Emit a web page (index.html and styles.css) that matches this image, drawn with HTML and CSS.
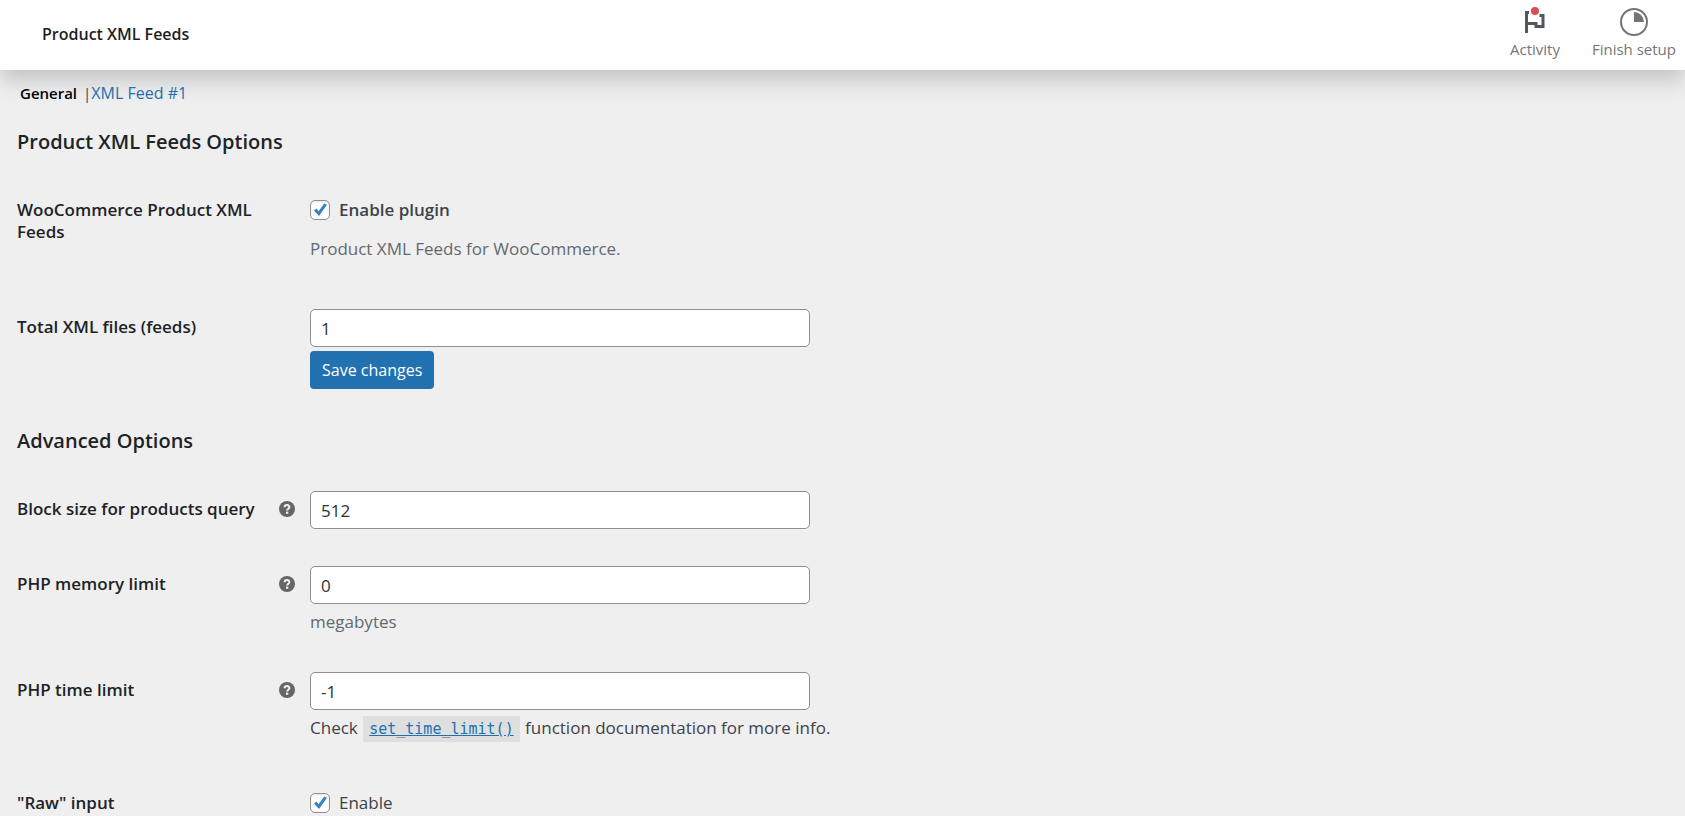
FILE: index.html
```html
<!DOCTYPE html>
<html lang="en">
<head>
<meta charset="utf-8">
<title>Product XML Feeds</title>
<link rel="stylesheet" href="styles.css">
</head>
<body>
<header class="topbar">
  <h1 class="topbar-title">Product XML Feeds</h1>
  <div class="topbar-actions">
    <button type="button" class="action">
      <svg class="action-icon" width="30" height="30" viewBox="0 0 30 30" fill="none">
        <path d="M9 5.500H6.500V26M6.500 16.500H16V19.500H23V8.500H19.500" stroke="#50575e" stroke-width="3"/>
        <circle cx="15" cy="4" r="4" fill="#d94f4f"/>
      </svg>
      <span>Activity</span>
    </button>
    <button type="button" class="action">
      <svg class="action-icon" width="30" height="30" viewBox="0 0 30 30" fill="none">
        <circle cx="15" cy="15" r="13" stroke="#757575" stroke-width="2"/>
        <path d="M15 15V5A10 10 0 0 1 25 15Z" fill="#757575"/>
      </svg>
      <span>Finish setup</span>
    </button>
  </div>
</header>
<main class="content">
  <nav class="tabs">
    <a class="tab tab-current" href="#general">General</a>
    <span class="tab-divider">|</span>
    <a class="tab tab-link" href="#feed-1">XML Feed #1</a>
  </nav>
  <form>
    <h2 class="section-title">Product XML Feeds Options</h2>
    <div class="row row-check">
      <div class="label">WooCommerce Product XML Feeds</div>
      <div class="field">
        <label class="check check-strong"><input type="checkbox" class="checkbox" checked>Enable plugin</label>
        <p class="description description-spaced">Product XML Feeds for WooCommerce.</p>
      </div>
    </div>
    <div class="row">
      <div class="label"><label for="total">Total XML files (feeds)</label></div>
      <div class="field">
        <input class="text" type="text" id="total" value="1">
        <button type="submit" class="save">Save changes</button>
      </div>
    </div>
    <h2 class="section-title section-advanced">Advanced Options</h2>
    <div class="row">
      <div class="label"><label for="block">Block size for products query</label>
        <svg class="help" width="16" height="16" viewBox="0 0 16 16"><circle cx="8" cy="8" r="8" fill="#666"/><path d="M5.600 6.200C5.600 3.400 10.400 3.400 10.400 6.100C10.400 7.700 8.200 7.700 8.200 9.500" fill="none" stroke="#f0f0f0" stroke-width="2"/><rect x="7" y="10.600" width="2.300" height="2.200" fill="#f0f0f0"/></svg>
      </div>
      <div class="field"><input class="text" type="text" id="block" value="512"></div>
    </div>
    <div class="row">
      <div class="label"><label for="memory">PHP memory limit</label>
        <svg class="help" width="16" height="16" viewBox="0 0 16 16"><circle cx="8" cy="8" r="8" fill="#666"/><path d="M5.600 6.200C5.600 3.400 10.400 3.400 10.400 6.100C10.400 7.700 8.200 7.700 8.200 9.500" fill="none" stroke="#f0f0f0" stroke-width="2"/><rect x="7" y="10.600" width="2.300" height="2.200" fill="#f0f0f0"/></svg>
      </div>
      <div class="field">
        <input class="text" type="text" id="memory" value="0">
        <p class="description">megabytes</p>
      </div>
    </div>
    <div class="row">
      <div class="label"><label for="time">PHP time limit</label>
        <svg class="help" width="16" height="16" viewBox="0 0 16 16"><circle cx="8" cy="8" r="8" fill="#666"/><path d="M5.600 6.200C5.600 3.400 10.400 3.400 10.400 6.100C10.400 7.700 8.200 7.700 8.200 9.500" fill="none" stroke="#f0f0f0" stroke-width="2"/><rect x="7" y="10.600" width="2.300" height="2.200" fill="#f0f0f0"/></svg>
      </div>
      <div class="field">
        <input class="text" type="text" id="time" value="-1">
        <p class="description description-dark">Check <code class="code"><a href="#set-time-limit">set_time_limit()</a></code> function documentation for more info.</p>
      </div>
    </div>
    <div class="row row-check row-last">
      <div class="label">"Raw" input</div>
      <div class="field">
        <label class="check"><input type="checkbox" class="checkbox" checked>Enable</label>
      </div>
    </div>
  </form>
</main>
</body>
</html>
```
FILE: styles.css
```css
* { box-sizing: border-box; }

body {
  margin: 0;
  background: #efefef;
  color: #3c434a;
  font: 17px/22px "Open Sans", "Noto Sans", sans-serif;
}

a { color: #2271b1; }

.topbar {
  position: relative;
  display: flex;
  justify-content: space-between;
  align-items: flex-start;
  height: 70px;
  padding: 0 9px 0 42px;
  background: #fff;
  box-shadow: 0 10px 20px rgba(85, 93, 102, 0.3);
}

.topbar-title {
  margin: 0;
  color: #1e1e1e;
  font-size: 16px;
  font-weight: 600;
  line-height: 68px;
}

.topbar-actions {
  display: flex;
  gap: 32px;
  padding-top: 7px;
}

.action {
  display: flex;
  flex-direction: column;
  align-items: center;
  padding: 0;
  border: 0;
  background: none;
  color: #757575;
  font: 15px/24px "Open Sans", "Noto Sans", sans-serif;
}

.action-icon { overflow: visible; }

.content { padding: 12px 17px 0; }

.tabs {
  display: flex;
  padding-left: 3px;
  font-size: 15px;
}

.tab { text-decoration: none; }

.tab-current {
  margin-right: 6px;
  color: #000;
  font-weight: 600;
}

.tab-link { font-size: 16px; }

.section-title {
  margin: 24px 0;
  color: #1d2327;
  font-size: 20px;
  font-weight: 600;
  line-height: 28px;
}

.section-advanced { margin: 20px 0 17px; }

.row {
  display: grid;
  grid-template-columns: 278px minmax(0, 500px);
  column-gap: 15px;
  padding: 19px 0 18px;
}

.row-last { padding-bottom: 0; }

.label {
  display: flex;
  justify-content: space-between;
  align-items: center;
  height: 36px;
  color: #1d2327;
  font-weight: 600;
}

.row-check .label {
  height: auto;
  align-self: start;
  padding-right: 32px;
}

.text {
  display: block;
  width: 100%;
  height: 38px;
  padding: 0 10px;
  border: 1px solid #8c8f94;
  border-radius: 5px;
  background: #fff;
  color: #2c3338;
  font: inherit;
}

.save {
  display: block;
  height: 38px;
  margin-top: 4px;
  padding: 0 12px;
  border: 0;
  border-radius: 4px;
  background: #2271b1;
  color: #fff;
  font: 16px/38px "Open Sans", "Noto Sans", sans-serif;
}

.check {
  display: flex;
  align-items: center;
  gap: 9px;
}

.check-strong { font-weight: 600; }

.checkbox {
  appearance: none;
  width: 20px;
  height: 20px;
  margin: 0;
  border: 1px solid #8c8f94;
  border-radius: 5px;
  background: #fff url("data:image/svg+xml,%3Csvg xmlns='http://www.w3.org/2000/svg' viewBox='0 0 18 18'%3E%3Cpath d='M3 9.500L5.500 7.500L7.600 10.300L13.200 2.600L16 3.800L8 15Z' fill='%233582c4'/%3E%3C/svg%3E") center / 18px 18px;
  box-shadow: inset 0 1px 2px rgba(0, 0, 0, 0.1);
}

.description {
  margin: 7px 0 2px;
  color: #646970;
  white-space: nowrap;
}

.description-spaced { margin: 17px 0 12px; }

.description-dark {
  margin-bottom: 16px;
  color: #3c434a;
}

.code {
  margin: 0 1px;
  padding: 4px 6px;
  background: #dfdfdf;
  font: 15px/18px "DejaVu Sans Mono", monospace;
}
```
